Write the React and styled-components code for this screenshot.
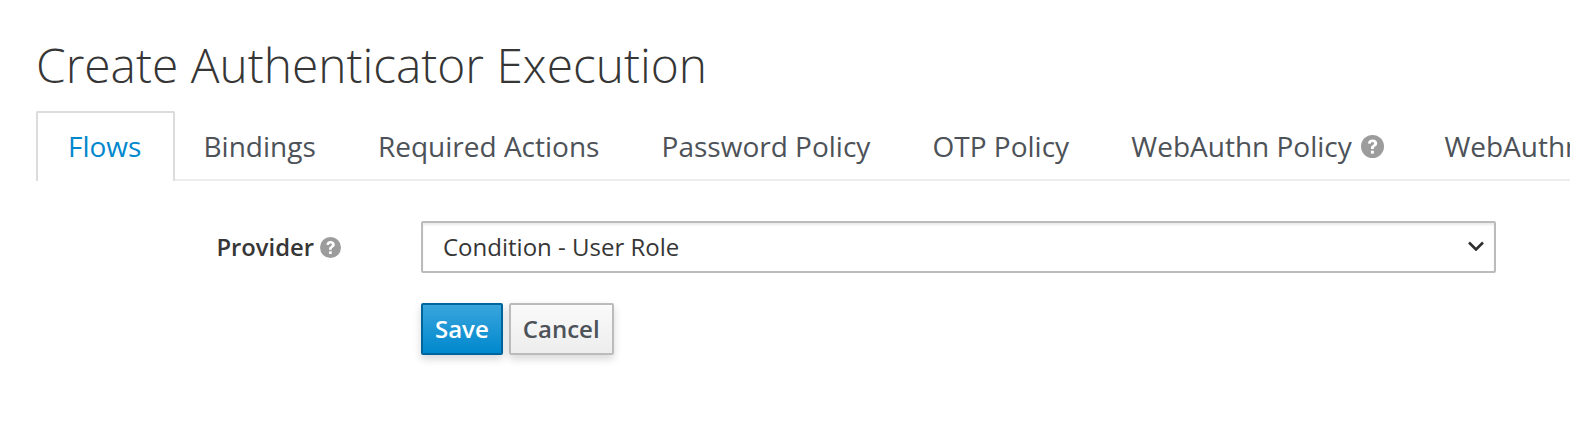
import React from 'react'
import styled, { createGlobalStyle } from 'styled-components'

const Global = createGlobalStyle`
  html, body {
    margin: 0;
    background: #fff;
    overflow: hidden;
  }
  body {
    font-family: "Open Sans", "Liberation Sans", sans-serif;
    color: #363636;
  }
`
const Page = styled.div`
  width: 1570px;
  height: 448px;
  padding: 32px 0 0 36px;
  box-sizing: border-box;
  overflow: hidden;
`
const Title = styled.h1`
  margin: 0 0 14px;
  font-size: 47.85px;
  line-height: 65px;
  font-weight: 300;
  color: #363636;
`
const Tabs = styled.ul`
  list-style: none;
  margin: 0;
  padding: 0;
  display: flex;
  height: 70px;
  box-sizing: border-box;
  border-bottom: 2px solid #ededed;
  white-space: nowrap;
`
const Tab = styled.li`
  flex: none;
  display: flex;
  align-items: center;
  gap: 9px;
  height: 70px;
  box-sizing: border-box;
  padding: 0 29.1px 2px;
  font-size: 28px;
  color: #4d5258;
  border: 2px solid transparent;
  border-bottom: none;
  border-radius: 2px 2px 0 0;
`
const ActiveTab = styled(Tab)`
  padding: 0 31.5px 2px 30px;
  margin-right: -2.5px;
  color: #0088ce;
  background: #fff;
  border-color: #dcdcdc;
`
const HelpTab = styled(Tab)`
  padding-right: 27.5px;
`
const Form = styled.form`
  display: grid;
  grid-template-columns: 305px 1075px;
  column-gap: 80px;
  row-gap: 30px;
  margin-top: 40px;
`
const Label = styled.label`
  display: flex;
  align-items: center;
  justify-content: flex-end;
  gap: 6px;
  font-size: 23.8px;
  font-weight: 600;
  color: #363636;
`
const SelectBox = styled.div`
  display: flex;
  align-items: center;
  justify-content: space-between;
  height: 52px;
  box-sizing: border-box;
  padding: 0 10px 2px 20px;
  border: 2px solid #bbb;
  border-radius: 2px;
  background: #fff;
  box-shadow: inset 0 2px 2px rgba(3, 3, 3, 0.08);
  font-size: 24px;
  color: #363636;
`
const Buttons = styled.div`
  grid-column: 2;
  display: flex;
  gap: 6px;
`
const Button = styled.button`
  height: 52px;
  box-sizing: border-box;
  padding: 0 12px 2px;
  font-family: inherit;
  font-size: 24px;
  font-weight: 600;
  border-radius: 2px;
  border: 2px solid ${props => (props.$primary ? '#00659c' : '#bbb')};
  color: ${props => (props.$primary ? '#fff' : '#4d5258')};
  background: ${props =>
    props.$primary
      ? 'linear-gradient(to bottom, #39a5dc 0%, #0088ce 100%)'
      : 'linear-gradient(to bottom, #fafafa 0%, #ededed 100%)'};
  box-shadow: 0 4px 8px rgba(3, 3, 3, 0.16);
`

const HelpIcon = ({ size = 23 }) => (
  <svg width={size} height={size} viewBox="0 0 22 22" aria-hidden="true">
    <circle cx="11" cy="11" r="11" fill="#9c9c9c" />
    <path
      d="M6.6 8.2C6.8 5.7 8.6 4.3 11.1 4.3c2.5 0 4.4 1.4 4.4 3.6 0 1.5-.8 2.4-2 3.2-1 .7-1.2 1-1.2 1.9v.4H9.5v-.7c0-1.4.5-2.1 1.6-2.9.9-.6 1.3-1 1.3-1.7 0-.8-.5-1.3-1.4-1.3-.9 0-1.5.6-1.6 1.5z"
      fill="#fff"
    />
    <rect x="9.5" y="15" width="2.8" height="2.8" fill="#fff" />
  </svg>
)

const Chevron = () => (
  <svg width="16" height="10" viewBox="0 0 16 10" aria-hidden="true">
    <path d="M1 1.5 L8 8.5 L15 1.5" fill="none" stroke="#2f2f2f" strokeWidth="2.6" />
  </svg>
)

const tabs = ['Bindings', 'Required Actions', 'Password Policy', 'OTP Policy']

export default function App() {
  return (
    <Page>
      <Global />
      <Title>Create Authenticator Execution</Title>
      <Tabs>
        <ActiveTab>Flows</ActiveTab>
        {tabs.map(t => (
          <Tab key={t}>{t}</Tab>
        ))}
        <HelpTab>
          WebAuthn Policy
          <HelpIcon />
        </HelpTab>
        <Tab>WebAuthn Passwordless Policy</Tab>
      </Tabs>
      <Form>
        <Label>
          Provider
          <HelpIcon size={21} />
        </Label>
        <SelectBox>
          Condition - User Role
          <Chevron />
        </SelectBox>
        <Buttons>
          <Button type="button" $primary>Save</Button>
          <Button type="button">Cancel</Button>
        </Buttons>
      </Form>
    </Page>
  )
}
